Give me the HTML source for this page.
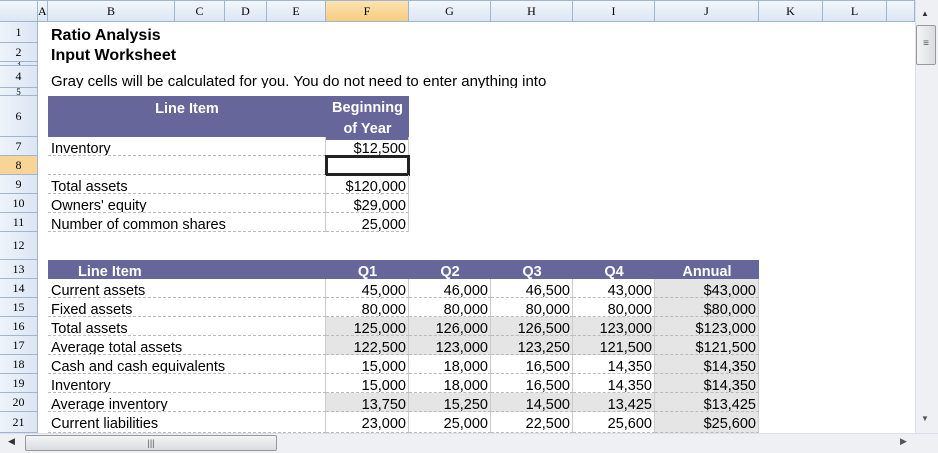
<!DOCTYPE html>
<html><head><meta charset="utf-8"><style>
*{margin:0;padding:0;box-sizing:border-box}
body{width:938px;height:453px;overflow:hidden;background:#fff;position:relative;font-family:"Liberation Sans",sans-serif;}
.a{position:absolute}
.ch{position:absolute;top:1px;height:21px;background:linear-gradient(#f3f6fb,#dce6f3);border-right:1px solid #9eb6ce;border-bottom:1px solid #9eb6ce;font:12px "Liberation Serif",serif;text-align:center;line-height:21px;color:#000}
.rh{position:absolute;left:0;width:38px;background:linear-gradient(90deg,#eef3fa,#dce6f3);border-right:1px solid #9eb6ce;border-bottom:1px solid #9eb6ce;font:12px "Liberation Serif",serif;text-align:center;overflow:hidden;display:flex;align-items:center;justify-content:center}
.t{position:absolute;font-size:14.5px;line-height:19px;padding-top:3px;height:19px;overflow:hidden;display:block;color:#000;white-space:nowrap}
.l{left:48px;width:278px;padding-left:3px;border-bottom:1px dashed #bbb;border-right:1px solid #ccc}
.n{text-align:right;padding-right:2px;border-bottom:1px dashed #bbb;border-right:1px solid #ccc}
.c{text-align:center}
.g{background:#e5e5e5}
.hd{background:#66669a;color:#fff;font-weight:bold}
</style></head><body>
<div class="a" style="left:0;top:0;width:915px;height:1px;background:#9eb6ce"></div>
<div class="ch" style="left:0;width:38px"></div>
<div class="ch" style="left:38px;width:10px;text-align:left">A</div>
<div class="ch" style="left:48px;width:127px">B</div>
<div class="ch" style="left:175px;width:50px">C</div>
<div class="ch" style="left:225px;width:42px">D</div>
<div class="ch" style="left:267px;width:59px">E</div>
<div class="ch" style="left:326px;width:83px;background:linear-gradient(#fbe3b3,#f7cc7f)">F</div>
<div class="ch" style="left:409px;width:82px">G</div>
<div class="ch" style="left:491px;width:82px">H</div>
<div class="ch" style="left:573px;width:82px">I</div>
<div class="ch" style="left:655px;width:104px">J</div>
<div class="ch" style="left:759px;width:64px">K</div>
<div class="ch" style="left:823px;width:64px">L</div>
<div class="ch" style="left:887px;width:28px"></div>
<div class="rh" style="top:22px;height:21px">1</div>
<div class="rh" style="top:43px;height:19px">2</div>
<div class="rh" style="top:62px;height:4px;font-size:9px">3</div>
<div class="rh" style="top:66px;height:22px">4</div>
<div class="rh" style="top:88px;height:8px;font-size:9px">5</div>
<div class="rh" style="top:96px;height:41px">6</div>
<div class="rh" style="top:137px;height:19px">7</div>
<div class="rh" style="top:156px;height:19px;background:#f8d596">8</div>
<div class="rh" style="top:175px;height:19px">9</div>
<div class="rh" style="top:194px;height:19px">10</div>
<div class="rh" style="top:213px;height:19px">11</div>
<div class="rh" style="top:232px;height:28px">12</div>
<div class="rh" style="top:260px;height:19px">13</div>
<div class="rh" style="top:279px;height:19px">14</div>
<div class="rh" style="top:298px;height:19px">15</div>
<div class="rh" style="top:317px;height:19px">16</div>
<div class="rh" style="top:336px;height:19px">17</div>
<div class="rh" style="top:355px;height:19px">18</div>
<div class="rh" style="top:374px;height:19px">19</div>
<div class="rh" style="top:393px;height:19px">20</div>
<div class="rh" style="top:412px;height:21px">21</div>
<div class="t" style="left:51px;top:23px;height:20px;font-size:16px;font-weight:bold">Ratio Analysis</div>
<div class="t" style="left:51px;top:43px;height:20px;font-size:16px;font-weight:bold">Input Worksheet</div>
<div class="t" style="left:51px;top:69px;height:19px;font-size:15px;width:522px">Gray cells will be calculated for you. You do not need to enter anything into</div>
<div class="a hd" style="left:48px;top:96px;width:361px;height:41px"></div>
<div class="t hd c" style="left:48px;top:97px;width:278px">Line Item</div>
<div class="a hd" style="left:326px;top:98px;width:83px;font-size:14.5px;line-height:21px;text-align:center">Beginning<br>of Year</div>
<div class="t l" style="top:137px">Inventory</div><div class="t n" style="left:326px;top:137px;width:83px">$12,500</div>
<div class="t l" style="top:156px"></div><div class="a" style="left:325px;top:155px;width:85px;height:21px;border:3px solid #222"></div>
<div class="t l" style="top:175px">Total assets</div><div class="t n" style="left:326px;top:175px;width:83px">$120,000</div>
<div class="t l" style="top:194px">Owners' equity</div><div class="t n" style="left:326px;top:194px;width:83px">$29,000</div>
<div class="t l" style="top:213px">Number of common shares</div><div class="t n" style="left:326px;top:213px;width:83px">25,000</div>
<div class="a hd" style="left:48px;top:260px;width:711px;height:19px"></div>
<div class="t hd" style="left:78px;top:260px">Line Item</div>
<div class="t hd c" style="left:326px;top:260px;width:83px">Q1</div>
<div class="t hd c" style="left:409px;top:260px;width:82px">Q2</div>
<div class="t hd c" style="left:491px;top:260px;width:82px">Q3</div>
<div class="t hd c" style="left:573px;top:260px;width:82px">Q4</div>
<div class="t hd c" style="left:655px;top:260px;width:104px">Annual</div>

<div class="t l" style="top:279px">Current assets</div>
<div class="t n" style="left:326px;top:279px;width:83px">45,000</div><div class="t n" style="left:409px;top:279px;width:82px">46,000</div><div class="t n" style="left:491px;top:279px;width:82px">46,500</div><div class="t n" style="left:573px;top:279px;width:82px">43,000</div><div class="t n g" style="left:655px;top:279px;width:104px">$43,000</div>
<div class="t l" style="top:298px">Fixed assets</div>
<div class="t n" style="left:326px;top:298px;width:83px">80,000</div><div class="t n" style="left:409px;top:298px;width:82px">80,000</div><div class="t n" style="left:491px;top:298px;width:82px">80,000</div><div class="t n" style="left:573px;top:298px;width:82px">80,000</div><div class="t n g" style="left:655px;top:298px;width:104px">$80,000</div>
<div class="t l" style="top:317px">Total assets</div>
<div class="t n g" style="left:326px;top:317px;width:83px">125,000</div><div class="t n g" style="left:409px;top:317px;width:82px">126,000</div><div class="t n g" style="left:491px;top:317px;width:82px">126,500</div><div class="t n g" style="left:573px;top:317px;width:82px">123,000</div><div class="t n g" style="left:655px;top:317px;width:104px">$123,000</div>
<div class="t l" style="top:336px">Average total assets</div>
<div class="t n g" style="left:326px;top:336px;width:83px">122,500</div><div class="t n g" style="left:409px;top:336px;width:82px">123,000</div><div class="t n g" style="left:491px;top:336px;width:82px">123,250</div><div class="t n g" style="left:573px;top:336px;width:82px">121,500</div><div class="t n g" style="left:655px;top:336px;width:104px">$121,500</div>
<div class="t l" style="top:355px">Cash and cash equivalents</div>
<div class="t n" style="left:326px;top:355px;width:83px">15,000</div><div class="t n" style="left:409px;top:355px;width:82px">18,000</div><div class="t n" style="left:491px;top:355px;width:82px">16,500</div><div class="t n" style="left:573px;top:355px;width:82px">14,350</div><div class="t n g" style="left:655px;top:355px;width:104px">$14,350</div>
<div class="t l" style="top:374px">Inventory</div>
<div class="t n" style="left:326px;top:374px;width:83px">15,000</div><div class="t n" style="left:409px;top:374px;width:82px">18,000</div><div class="t n" style="left:491px;top:374px;width:82px">16,500</div><div class="t n" style="left:573px;top:374px;width:82px">14,350</div><div class="t n g" style="left:655px;top:374px;width:104px">$14,350</div>
<div class="t l" style="top:393px">Average inventory</div>
<div class="t n g" style="left:326px;top:393px;width:83px">13,750</div><div class="t n g" style="left:409px;top:393px;width:82px">15,250</div><div class="t n g" style="left:491px;top:393px;width:82px">14,500</div><div class="t n g" style="left:573px;top:393px;width:82px">13,425</div><div class="t n g" style="left:655px;top:393px;width:104px">$13,425</div>
<div class="t l" style="top:412px;height:21px">Current liabilities</div>
<div class="t n" style="left:326px;top:412px;width:83px;height:21px">23,000</div><div class="t n" style="left:409px;top:412px;width:82px;height:21px">25,000</div><div class="t n" style="left:491px;top:412px;width:82px;height:21px">22,500</div><div class="t n" style="left:573px;top:412px;width:82px;height:21px">25,600</div><div class="t n g" style="left:655px;top:412px;width:104px;height:21px">$25,600</div>
<div class="a" style="left:915px;top:0;width:23px;height:433px;background:#eef0f3;border-left:1px solid #dde"></div>
<div class="a" style="left:921px;top:9px;font-size:8px;color:#333">&#9650;</div>
<div class="a" style="left:916px;top:25px;width:20px;height:40px;background:linear-gradient(90deg,#f4f4f4,#d9dce0);border:1px solid #999;border-radius:2px;font-size:10px;text-align:center;line-height:36px;color:#555">&#8801;</div>
<div class="a" style="left:921px;top:414px;font-size:8px;color:#555">&#9660;</div>
<div class="a" style="left:0;top:433px;width:938px;height:20px;background:#eef0f3;border-top:1px solid #dde"></div>
<div class="a" style="left:8px;top:436px;font-size:9px;color:#333">&#9664;</div>
<div class="a" style="left:25px;top:435px;width:252px;height:16px;background:linear-gradient(#f4f4f4,#d9dce0);border:1px solid #999;border-radius:2px;font-size:9px;text-align:center;line-height:14px;color:#555">|||</div>
<div class="a" style="left:900px;top:436px;font-size:9px;color:#555">&#9654;</div>
</body></html>
